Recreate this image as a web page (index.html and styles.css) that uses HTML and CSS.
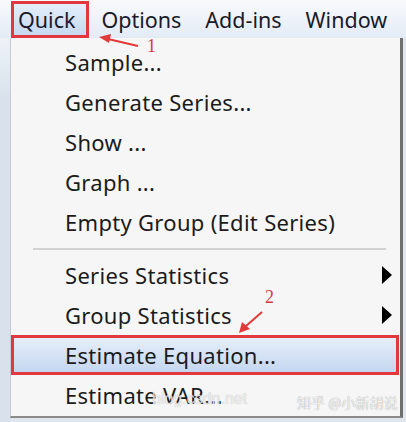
FILE: index.html
```html
<!DOCTYPE html>
<html>
<head>
<meta charset="utf-8">
<link rel="stylesheet" href="styles.css">
</head>
<body>
<div class="screen">
  <div class="menubar">
    <div class="mb-item mb-active">Quick</div>
    <div class="mb-item">Options</div>
    <div class="mb-item">Add-ins</div>
    <div class="mb-item">Window</div>
  </div>
  <div class="below">
    <div class="side"></div>
    <div class="popup">
      <div class="mi">Sample...</div>
      <div class="mi">Generate Series...</div>
      <div class="mi">Show ...</div>
      <div class="mi">Graph ...</div>
      <div class="mi">Empty Group (Edit Series)</div>
      <div class="sep"></div>
      <div class="mi">Series Statistics<span class="tri"></span></div>
      <div class="mi">Group Statistics<span class="tri"></span></div>
      <div class="mi mi-hot">Estimate Equation...</div>
      <div class="mi">Estimate VAR...</div>
    </div>
  </div>
  <svg class="annot" width="406" height="422" viewBox="0 0 406 422">
    <line x1="138" y1="46" x2="108" y2="39" stroke="#e23a3a" stroke-width="2"/>
    <polygon points="99,37 111,34 109,43" fill="#e23a3a"/>
    <line x1="262" y1="312" x2="246" y2="326" stroke="#e23a3a" stroke-width="2"/>
    <polygon points="239,333 242,322 250,329" fill="#e23a3a"/>
  </svg>
  <div class="num n1">1</div>
  <div class="num n2">2</div>
  <div class="wm wm1">blog.csdn.net</div>
  <div class="wm wm2">知乎 @小新胡说</div>
</div>
</body>
</html>
```
FILE: styles.css
```css
html, body {
  margin: 0;
  padding: 0;
}
body {
  width: 406px;
  height: 422px;
  overflow: hidden;
  background: #dfe6ee;
  font-family: "Noto Sans", "Open Sans", sans-serif;
  color: #1b1b1b;
}
.screen {
  position: relative;
  width: 406px;
  height: 422px;
}
.menubar {
  height: 38px;
  display: flex;
  align-items: stretch;
  background: linear-gradient(#f8fafd, #e3ebf5);
  padding-left: 11px;
  box-sizing: border-box;
}
.mb-item {
  font-size: 21.5px;
  white-space: nowrap;
  flex-shrink: 0;
  display: flex;
  align-items: center;
  padding: 0 12px;
  color: #1a1a2a;
}
.mb-active {
  border: 3px solid #e0383c;
  background: linear-gradient(#e4eefa, #c6d9f0);
  padding: 0 11px 0 4px;
  margin-top: 1px;
}
.below {
  display: flex;
  height: 384px;
}
.side {
  width: 10px;
  background: linear-gradient(#eef2f7, #d9e2ec 60px, #d9e2ec);
}
.popup {
  width: 393px;
  height: 380px;
  background: #f6f6f6;
  border-left: 1px solid #c8ccd2;
  border-right: 3px solid #6f6f6f;
  border-bottom: 2px solid #8a8a8a;
  padding-top: 4px;
  box-sizing: border-box;
  display: flex;
  flex-direction: column;
}
.mi {
  height: 40px;
  display: flex;
  align-items: center;
  padding-left: 54px;
  padding-right: 8px;
  font-size: 22px;
  letter-spacing: 0.3px;
  white-space: nowrap;
  flex-shrink: 0;
  box-sizing: border-box;
}
.tri {
  margin-left: auto;
  width: 0;
  height: 0;
  border-top: 9px solid transparent;
  border-bottom: 9px solid transparent;
  border-left: 10px solid #000;
}
.sep {
  height: 13px;
  flex-shrink: 0;
  display: flex;
  align-items: center;
  padding: 0 14px 0 22px;
}
.sep::before {
  content: "";
  flex: 1;
  height: 2px;
  background: #d2d2d2;
}
.mi-hot {
  border: 3px solid #e0383c;
  background: linear-gradient(#e6eefa, #c4d7f0);
  padding-left: 51px;
  margin-right: 1px;
}
.annot {
  position: absolute;
  left: 0;
  top: 0;
  pointer-events: none;
}
.num {
  position: absolute;
  font-family: "Liberation Serif", serif;
  color: #d9383c;
  font-size: 18px;
}
.n1 { left: 147px; top: 36px; }
.n2 { left: 265px; top: 287px; }
.wm {
  position: absolute;
  color: rgba(255,255,255,0.75);
  font-size: 16px;
  text-shadow: 0 0 1px rgba(120,120,120,0.6);
}
.wm1 { left: 152px; top: 390px; font-family: "Liberation Sans", sans-serif; }
.wm2 { left: 297px; top: 392px; font-family: "Noto Sans CJK SC", sans-serif; font-size: 14px; color: rgba(255,255,255,0.85); text-shadow: 0 0 1px #888; }
```
